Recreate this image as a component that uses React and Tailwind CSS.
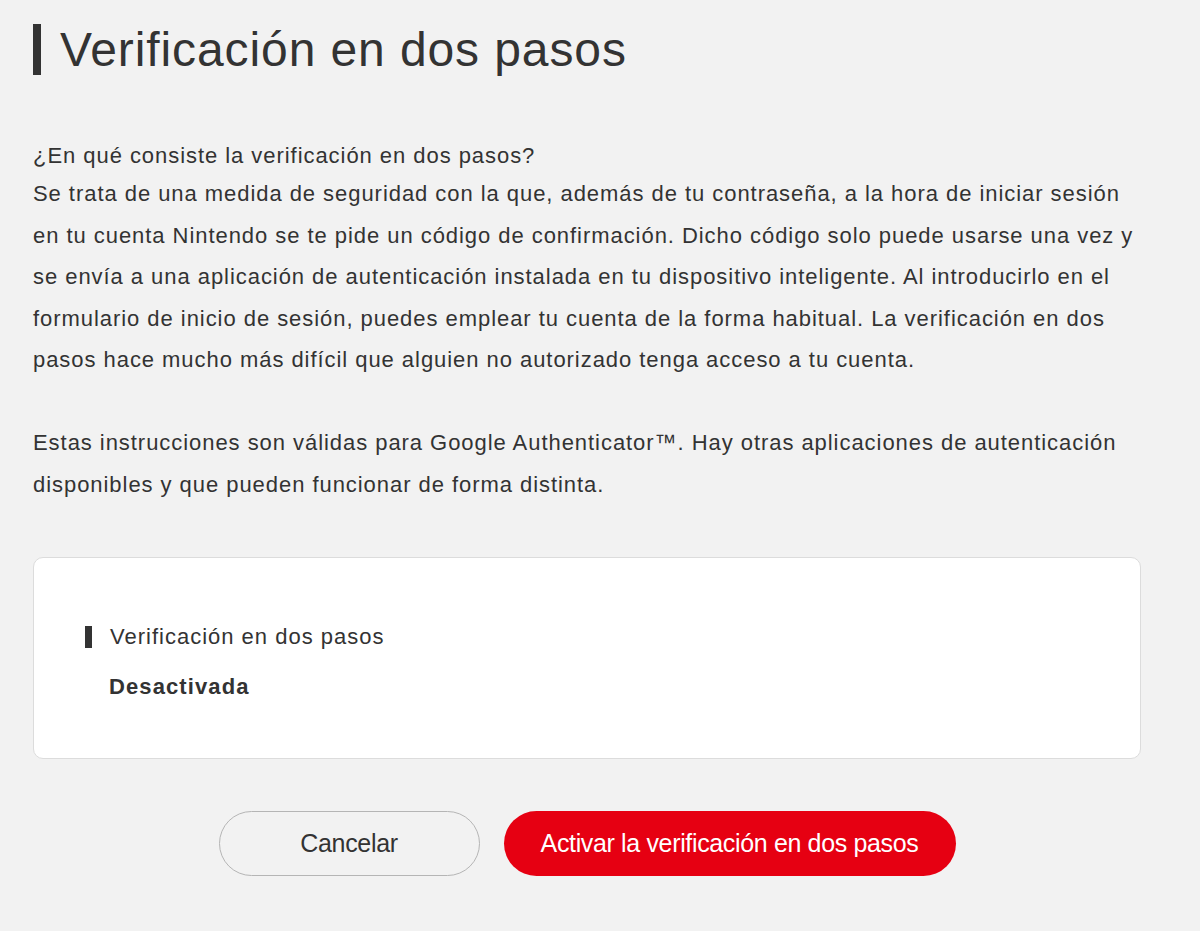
export default function App() {
  return (
    <div className="min-h-[931px] w-[1200px] bg-[#f2f2f2] text-[#333] font-['Liberation_Sans',Arial,sans-serif]">
      <div className="pl-[33px] pr-[59px] pt-[24px]">
        <h1 className="flex items-center gap-[19px]">
          <span className="block h-[51px] w-[8px] bg-[#333]" />
          <span className="text-[48px] leading-[51px] tracking-[0.9px] text-[#333]">Verificación en dos pasos</span>
        </h1>
        <div className="mt-[63px] text-[22px] leading-[41.5px] tracking-[0.95px]">
          <p className="leading-[35px]">¿En qué consiste la verificación en dos pasos?</p>
          <p>
            Se trata de una medida de seguridad con la que, además de tu contraseña, a la hora de iniciar sesión en tu cuenta Nintendo se te pide un código de confirmación. Dicho código solo puede usarse una vez y se envía a una aplicación de autenticación instalada en tu dispositivo inteligente. Al introducirlo en el formulario de inicio de sesión, puedes emplear tu cuenta de la forma habitual. La verificación en dos pasos hace mucho más difícil que alguien no autorizado tenga acceso a tu cuenta.
          </p>
          <p className="mt-[41.5px]">
            Estas instrucciones son válidas para Google Authenticator™. Hay otras aplicaciones de autenticación disponibles y que pueden funcionar de forma distinta.
          </p>
        </div>
        <div className="mt-[52px] h-[202px] rounded-[10px] border border-[#dcdcdc] bg-white pl-[51px] pt-[65px]">
          <div className="flex items-center gap-[18px]">
            <span className="block h-[22px] w-[7px] bg-[#333]" />
            <span className="text-[22px] leading-[28px] tracking-[1px]">Verificación en dos pasos</span>
          </div>
          <div className="mt-[22px] pl-[24px] text-[22px] font-bold leading-[28px] tracking-[1.1px]">Desactivada</div>
        </div>
        <div className="mt-[52px] flex justify-center gap-[24px]">
          <button className="h-[65px] w-[261px] rounded-full border border-[#b5b5b5] bg-[#f2f2f2] text-[25px] tracking-[-0.3px] text-[#333]">Cancelar</button>
          <button className="h-[65px] w-[452px] rounded-full bg-[#e60012] text-[25px] tracking-[-0.35px] text-white">Activar la verificación en dos pasos</button>
        </div>
      </div>
    </div>
  );
}
